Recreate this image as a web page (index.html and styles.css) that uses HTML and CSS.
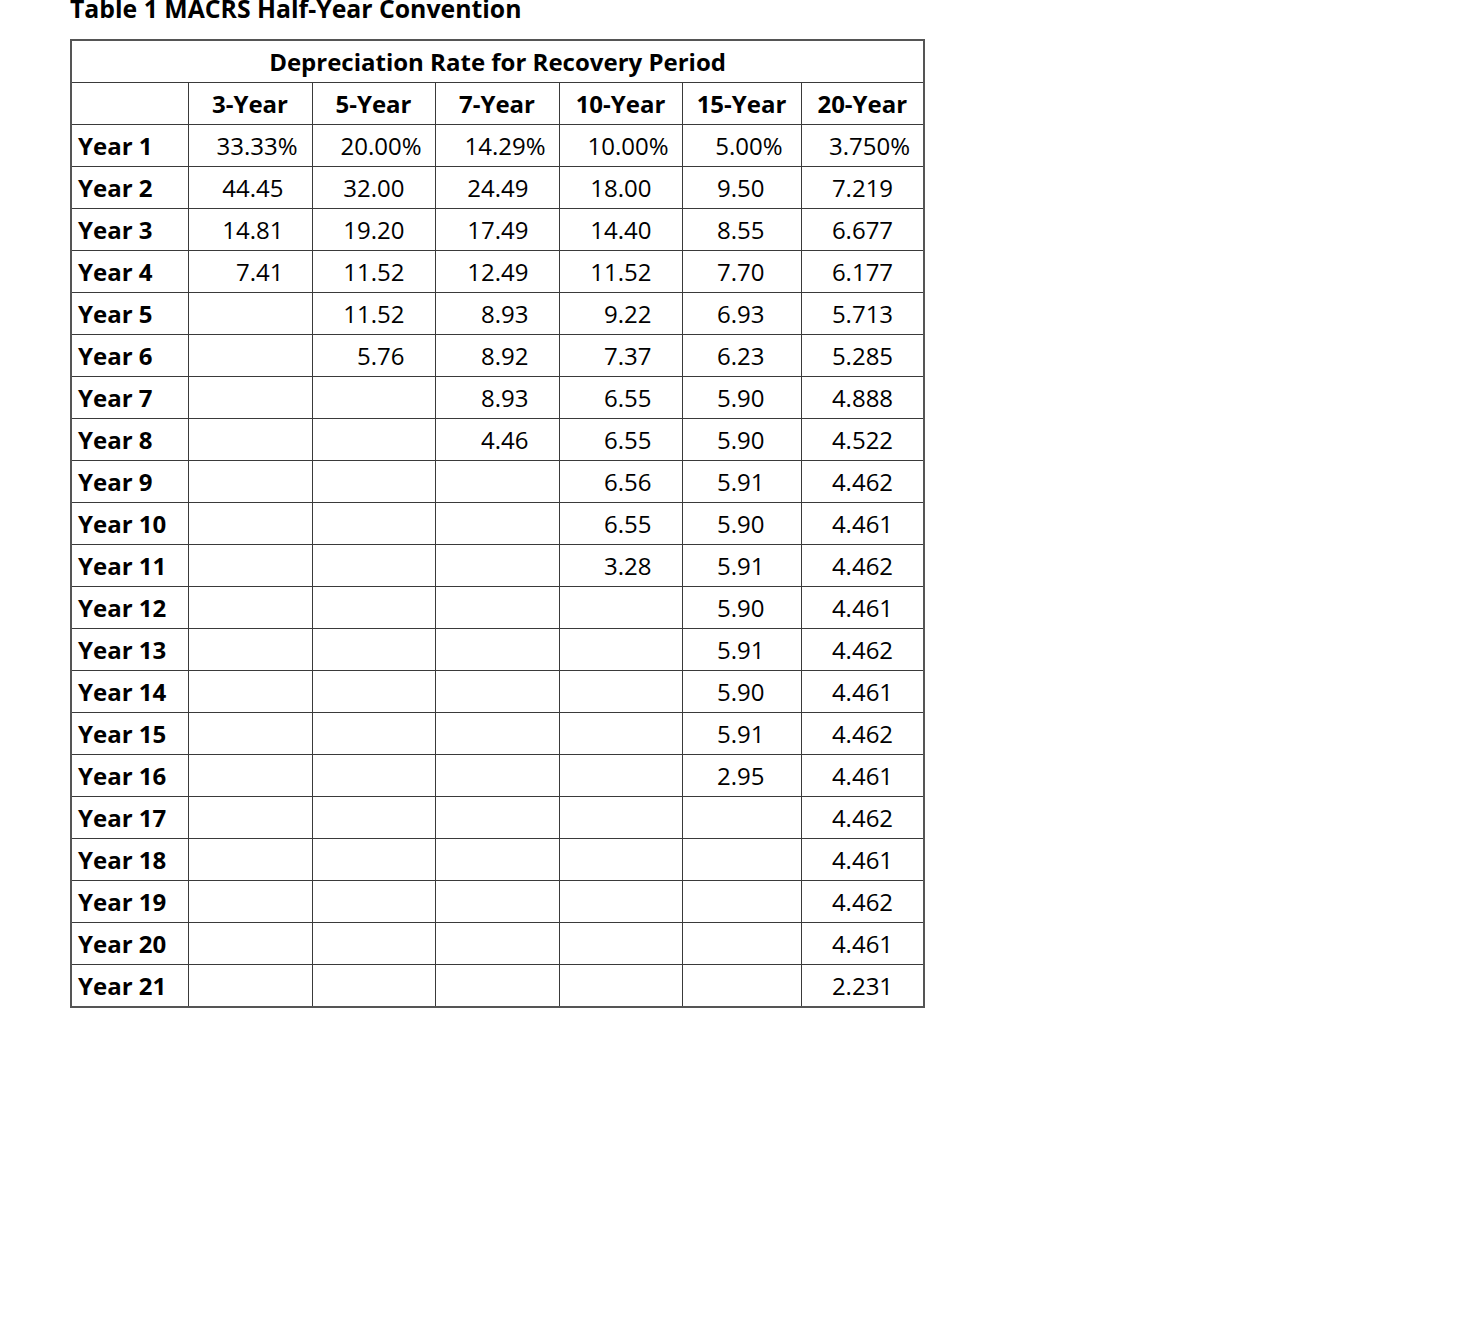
FILE: index.html
```html
<!DOCTYPE html>
<html>
<head>
<meta charset="utf-8">
<link rel="stylesheet" href="styles.css">
</head>
<body>
<div class="page">
<h1 class="title">Table 1 MACRS Half-Year Convention</h1>
<table class="macrs">
<colgroup>
<col class="c0"><col class="c1"><col class="c2"><col class="c3"><col class="c4"><col class="c5"><col class="c6">
</colgroup>
<thead>
<tr><th colspan="7" class="span">Depreciation Rate for Recovery Period</th></tr>
<tr><th></th><th>3-Year</th><th>5-Year</th><th>7-Year</th><th>10-Year</th><th>15-Year</th><th>20-Year</th></tr>
</thead>
<tbody>
<tr class="first"><th>Year 1</th><td>33.33%</td><td>20.00%</td><td>14.29%</td><td>10.00%</td><td>5.00%</td><td>3.750%</td></tr>
<tr><th>Year 2</th><td>44.45</td><td>32.00</td><td>24.49</td><td>18.00</td><td>9.50</td><td>7.219</td></tr>
<tr><th>Year 3</th><td>14.81</td><td>19.20</td><td>17.49</td><td>14.40</td><td>8.55</td><td>6.677</td></tr>
<tr><th>Year 4</th><td>7.41</td><td>11.52</td><td>12.49</td><td>11.52</td><td>7.70</td><td>6.177</td></tr>
<tr><th>Year 5</th><td></td><td>11.52</td><td>8.93</td><td>9.22</td><td>6.93</td><td>5.713</td></tr>
<tr><th>Year 6</th><td></td><td>5.76</td><td>8.92</td><td>7.37</td><td>6.23</td><td>5.285</td></tr>
<tr><th>Year 7</th><td></td><td></td><td>8.93</td><td>6.55</td><td>5.90</td><td>4.888</td></tr>
<tr><th>Year 8</th><td></td><td></td><td>4.46</td><td>6.55</td><td>5.90</td><td>4.522</td></tr>
<tr><th>Year 9</th><td></td><td></td><td></td><td>6.56</td><td>5.91</td><td>4.462</td></tr>
<tr><th>Year 10</th><td></td><td></td><td></td><td>6.55</td><td>5.90</td><td>4.461</td></tr>
<tr><th>Year 11</th><td></td><td></td><td></td><td>3.28</td><td>5.91</td><td>4.462</td></tr>
<tr><th>Year 12</th><td></td><td></td><td></td><td></td><td>5.90</td><td>4.461</td></tr>
<tr><th>Year 13</th><td></td><td></td><td></td><td></td><td>5.91</td><td>4.462</td></tr>
<tr><th>Year 14</th><td></td><td></td><td></td><td></td><td>5.90</td><td>4.461</td></tr>
<tr><th>Year 15</th><td></td><td></td><td></td><td></td><td>5.91</td><td>4.462</td></tr>
<tr><th>Year 16</th><td></td><td></td><td></td><td></td><td>2.95</td><td>4.461</td></tr>
<tr><th>Year 17</th><td></td><td></td><td></td><td></td><td></td><td>4.462</td></tr>
<tr><th>Year 18</th><td></td><td></td><td></td><td></td><td></td><td>4.461</td></tr>
<tr><th>Year 19</th><td></td><td></td><td></td><td></td><td></td><td>4.462</td></tr>
<tr><th>Year 20</th><td></td><td></td><td></td><td></td><td></td><td>4.461</td></tr>
<tr><th>Year 21</th><td></td><td></td><td></td><td></td><td></td><td>2.231</td></tr>
</tbody>
</table>
</div>
</body>
</html>
```

FILE: styles.css
```css
html, body {
  margin: 0;
  padding: 0;
  background: #ffffff;
}
body {
  font-family: "Open Sans", "Noto Sans", "DejaVu Sans", sans-serif;
  color: #000000;
}
.page {
  padding-left: 70px;
}
.title {
  margin: -4px 0 18px 0;
  font-size: 24.8px;
  line-height: 25px;
  font-weight: 700;
}
.macrs {
  border-collapse: collapse;
  table-layout: fixed;
  width: 854px;
  font-size: 24px;
  border: 2px solid #555555;
}
.c0 { width: 117px; }
.c1 { width: 124px; }
.c2 { width: 123px; }
.c3 { width: 124px; }
.c4 { width: 123px; }
.c5 { width: 119px; }
.c6 { width: 123px; }
.macrs th,
.macrs td {
  border: 1px solid #3a3a3a;
  height: 41px;
  padding: 0;
  line-height: 30px;
  vertical-align: middle;
  white-space: nowrap;
}
.macrs thead th {
  font-weight: 700;
  text-align: center;
}
.macrs tbody th {
  font-weight: 700;
  text-align: left;
  padding-left: 6px;
}
.macrs tbody td {
  text-align: right;
  font-weight: 400;
  padding-right: 30px;
}
.macrs tbody td:nth-child(2) { padding-right: 28px; }
.macrs tbody td:nth-child(6) { padding-right: 36px; }
.macrs tbody tr.first td { padding-right: 13px; }
.macrs tbody tr.first td:nth-child(2) { padding-right: 14px; }
.macrs tbody tr.first td:nth-child(6) { padding-right: 18px; }
```
